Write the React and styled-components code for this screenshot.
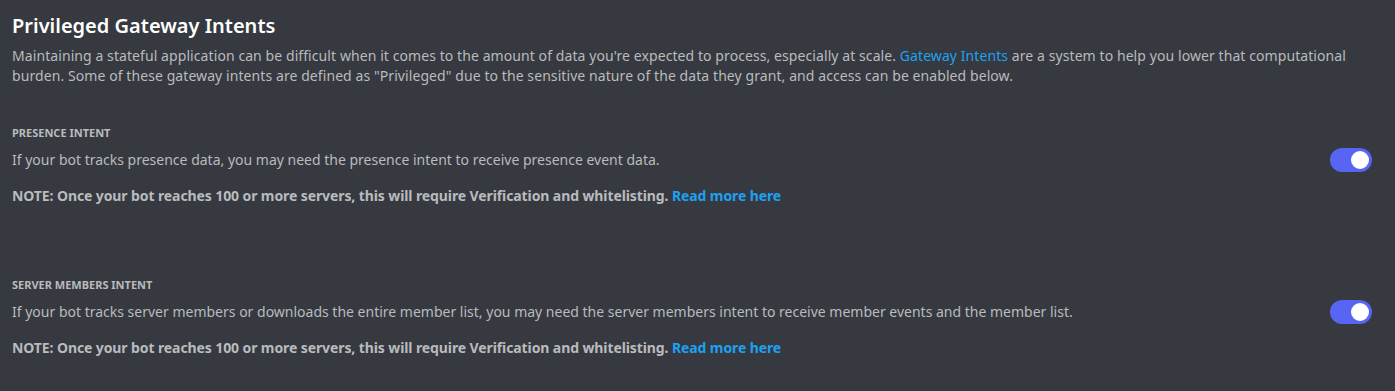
import React from "react";
import styled, { createGlobalStyle } from "styled-components";

const GlobalStyle = createGlobalStyle`
  html, body {
    margin: 0;
    background: #36393f;
  }
  body {
    font-family: "Noto Sans", "Open Sans", sans-serif;
  }
`;

const Page = styled.div`
  padding: 12px 12px 0 12px;
  width: 1395px;
  box-sizing: border-box;
`;

const Title = styled.h1`
  margin: 0 0 6px 0;
  color: #ffffff;
  font-size: 20px;
  font-weight: 600;
  line-height: 28px;
`;

const Description = styled.p`
  margin: 0;
  color: #b9bbbe;
  font-size: 14px;
  line-height: 20px;
  letter-spacing: 0.08px;
  padding-right: 16px;
`;

const Link = styled.a`
  color: #1da1f2;
  text-decoration: none;
  font-weight: ${(p) => (p.$bold ? 700 : 400)};
`;

const Section = styled.section`
  margin-top: ${(p) => p.$top}px;
`;

const SectionHeader = styled.h3`
  margin: 0 0 7px 0;
  color: #b9bbbe;
  font-size: 11px;
  font-weight: 700;
  text-transform: uppercase;
  line-height: 16px;
`;

const Row = styled.div`
  display: flex;
  align-items: center;
  justify-content: space-between;
  padding-right: 11px;
`;

const Body = styled.div`
  color: #b9bbbe;
  font-size: 14px;
  line-height: 20px;
`;

const Note = styled.div`
  margin-top: 14px;
  color: #b9bbbe;
  font-size: 14px;
  font-weight: 700;
  line-height: 20px;
  letter-spacing: -0.1px;
`;

const Switch = styled.div`
  width: 42px;
  height: 24px;
  border-radius: 12px;
  background: #5865f2;
  position: relative;
  flex-shrink: 0;

  &::after {
    content: "";
    position: absolute;
    top: 3px;
    right: 3px;
    width: 18px;
    height: 18px;
    border-radius: 50%;
    background: #ffffff;
  }
`;

const intents = [
  {
    name: "Presence Intent",
    body: "If your bot tracks presence data, you may need the presence intent to receive presence event data.",
    top: 39,
  },
  {
    name: "Server Members Intent",
    body: "If your bot tracks server members or downloads the entire member list, you may need the server members intent to receive member events and the member list.",
    top: 71,
  },
];

export default function App() {
  return (
    <>
      <GlobalStyle />
      <Page>
        <Title>Privileged Gateway Intents</Title>
        <Description>
          Maintaining a stateful application can be difficult when it comes to the amount of data
          you're expected to process, especially at scale. <Link href="#">Gateway Intents</Link> are
          a system to help you lower that computational burden. Some of these gateway intents are
          defined as "Privileged" due to the sensitive nature of the data they grant, and access can
          be enabled below.
        </Description>
        {intents.map((it) => (
          <Section key={it.name} $top={it.top}>
            <SectionHeader>{it.name}</SectionHeader>
            <Row>
              <Body>{it.body}</Body>
              <Switch />
            </Row>
            <Note>
              NOTE: Once your bot reaches 100 or more servers, this will require Verification and
              whitelisting. <Link href="#" $bold>Read more here</Link>
            </Note>
          </Section>
        ))}
      </Page>
    </>
  );
}
